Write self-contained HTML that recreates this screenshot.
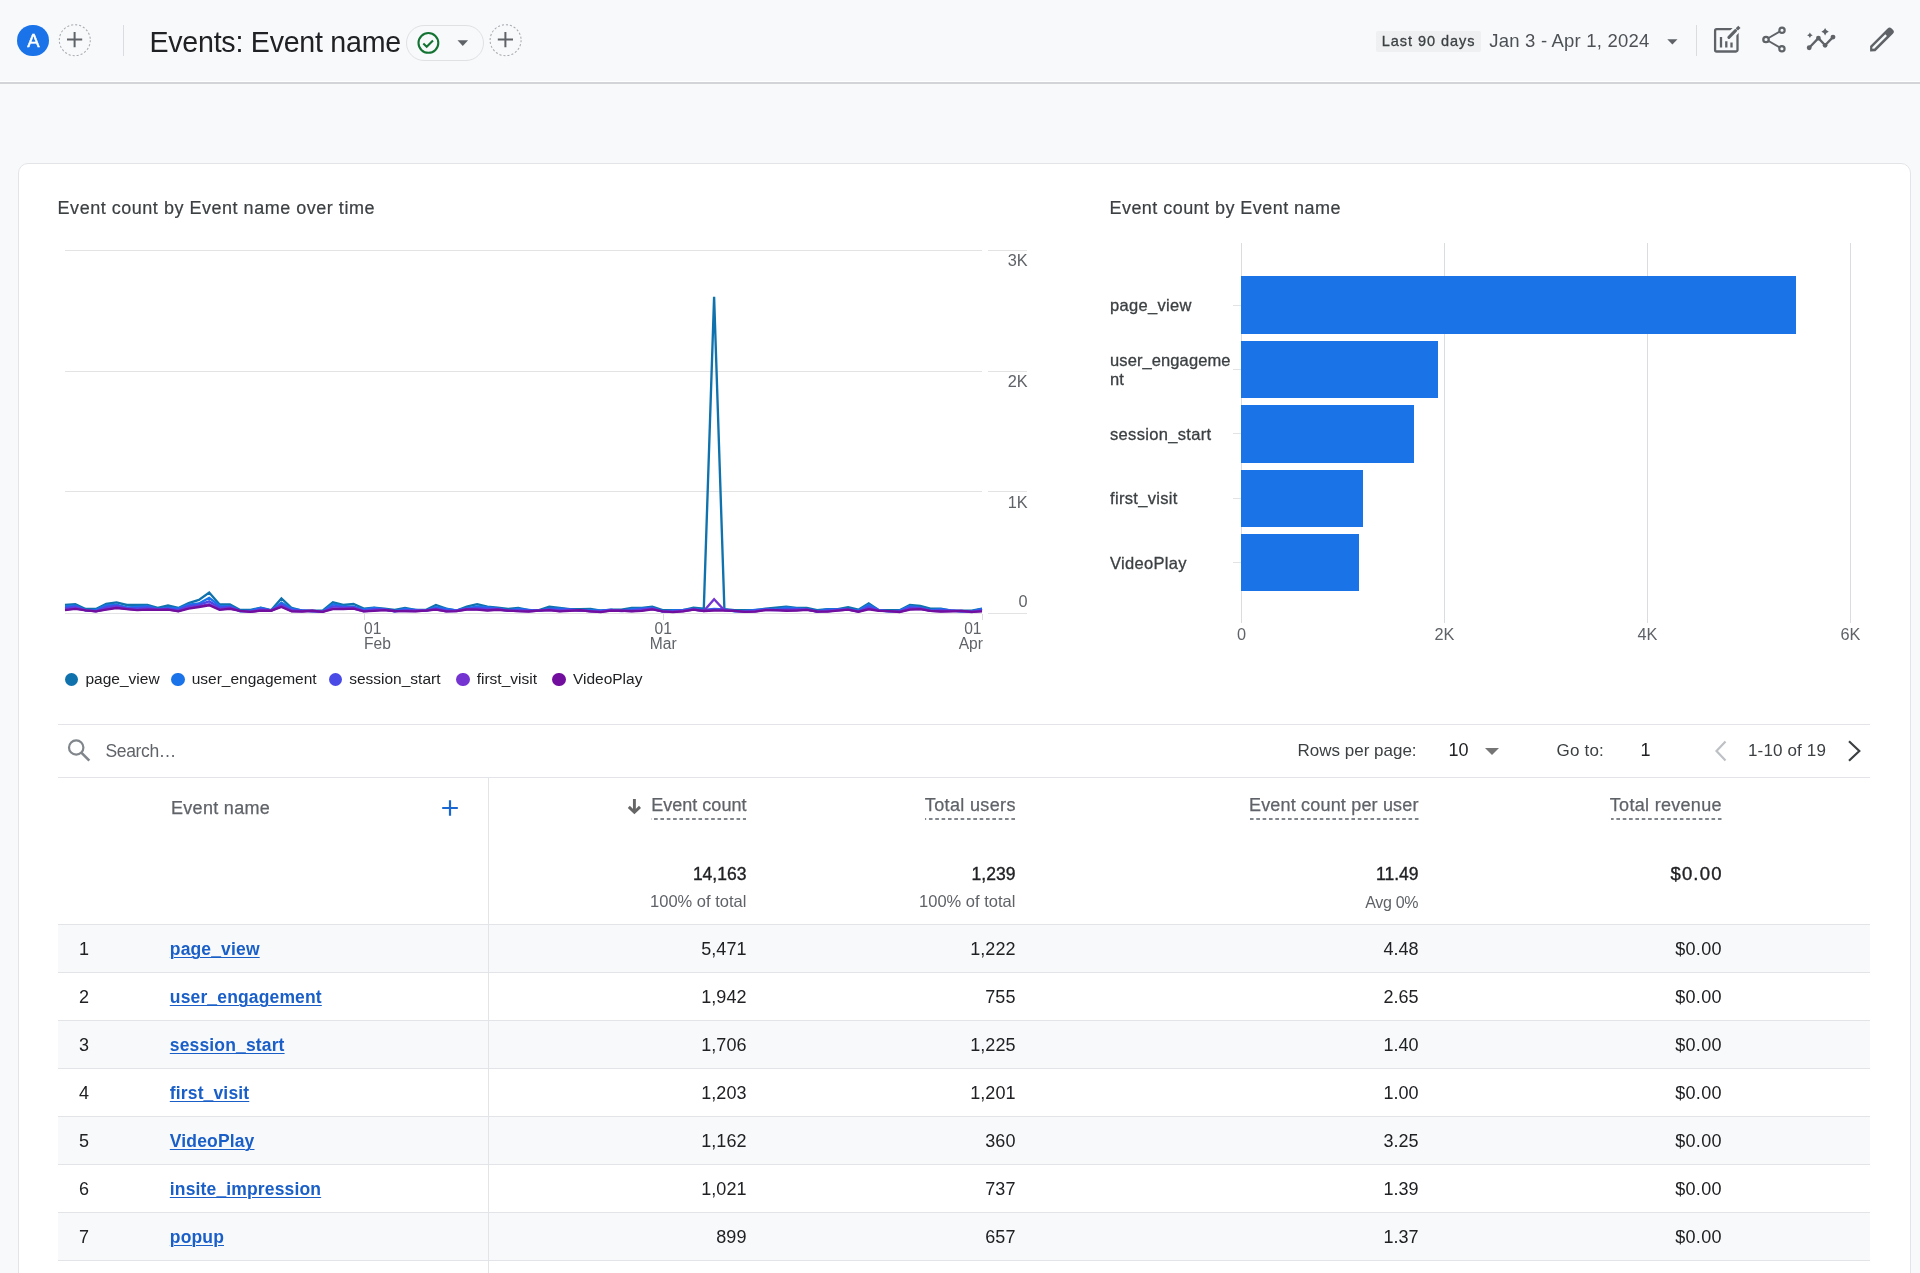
<!DOCTYPE html>
<html><head><meta charset="utf-8"><title>Events: Event name</title><style>
*{box-sizing:border-box}
html,body{margin:0;padding:0}
body{-webkit-font-smoothing:antialiased;width:1920px;height:1273px;overflow:hidden;position:relative;background:#f8f9fa;font-family:"Liberation Sans",sans-serif}
#root{position:absolute;left:0;top:0;width:1920px;height:1273px;will-change:transform}
.t{position:absolute;white-space:nowrap}
.ic{position:absolute;overflow:visible}
#hdr{position:absolute;left:0;top:0;width:1920px;height:84px;background:#f8f9fa;border-bottom:2px solid #d3d4d7;box-shadow:inset 0 -3px 0 -2px #fff}
.avatar{position:absolute;left:17.3px;top:24.6px;width:31.6px;height:31.6px;border-radius:50%;background:#1a73e8;color:#fff;font-size:18.5px;-webkit-text-stroke:0.45px #fff;line-height:31.5px;text-align:center;padding-left:0.5px}
.dplus{position:absolute;width:32px;height:32px;border-radius:50%;border:1.2px dashed #a8abb0}
.vsep{position:absolute;width:1px;background:#dadce0}
.pill{position:absolute;left:406px;top:24.5px;width:78px;height:36.5px;border-radius:19px;border:1px solid #dfe1e5;background:#f8f9fa}
#card{position:absolute;left:18px;top:163px;width:1893px;height:1200px;background:#fff;border:1px solid #e3e4e8;border-radius:10px}
.gl{position:absolute;height:1px;background:#e3e3e3}
.vgl{position:absolute;width:1px;background:#dadce0}
.hl{position:absolute;left:58px;width:1811.5px;height:1px;background:#e3e4e7}
.row{position:absolute;left:58px;width:1811.5px;background:#f8f9fa}
.dash{position:absolute;height:1.5px;background-image:linear-gradient(90deg,transparent 0,transparent 2.35px,#80868b 2.35px);background-size:6.35px 1.5px;background-position:right 0 top 0}
</style></head>
<body>
<div id="root">
<div id="hdr"></div><div class="avatar">A</div><div class="t" style="top:24.92px;font-size:28.6px;line-height:34.32px;color:#202124;letter-spacing:-0.25px;left:149.50px;">Events: Event name</div>
<div class="pill"></div><div class="vsep" style="left:123px;top:25px;height:31px"></div><div style="position:absolute;left:1376px;top:31px;width:105px;height:21px;background:#eff0f2;border-radius:2px"></div><div class="t" style="top:32.87px;font-size:14.5px;line-height:17.40px;color:#3c4043;letter-spacing:0.95px;left:1381.80px;-webkit-text-stroke:0.3px #3c4043;">Last 90 days</div>
<div class="t" style="top:30.49px;font-size:18.5px;line-height:22.20px;color:#4d5156;letter-spacing:0.2px;left:1489.30px;">Jan 3 - Apr 1, 2024</div>
<div class="vsep" style="left:1696px;top:25px;height:31px"></div><svg class="ic" style="left:0;top:0" width="1920" height="80" viewBox="0 0 1920 80">
<circle cx="74.8" cy="40.2" r="15.5" fill="none" stroke="#a8acb1" stroke-width="1.05" stroke-dasharray="2.1 1.95"/>
<path d="M74.6 32v15.2M67 39.6h15.2" stroke="#5f6368" stroke-width="2"/>
<circle cx="505.6" cy="40.2" r="15.5" fill="none" stroke="#a8acb1" stroke-width="1.05" stroke-dasharray="2.1 1.95"/>
<path d="M505.4 32v15.2M497.8 39.6h15.2" stroke="#5f6368" stroke-width="2"/>
<circle cx="428.4" cy="42.9" r="9.9" fill="none" stroke="#137333" stroke-width="2.1"/>
<path d="M423.3 43.4l3.4 3.3 6.3-6.3" fill="none" stroke="#137333" stroke-width="2.1"/>
<path d="M457.5 40.3h10.6l-5.3 5.6z" fill="#5f6368"/>
<path d="M1667.3 39.2h10.2l-5.1 5.3z" fill="#5f6368"/>
<path d="M1736 29.2H1716.6a1.5 1.5 0 0 0-1.5 1.5V50a1.5 1.5 0 0 0 1.5 1.5H1736a1.5 1.5 0 0 0 1.5-1.5V30.7a1.5 1.5 0 0 0-1.5-1.5z" fill="none" stroke="#5f6368" stroke-width="2.3"/>
<path d="M1729.6 36.6L1743 23.2" stroke="#f8f9fa" stroke-width="7.8"/>
<path d="M1721 37v10.6M1726.3 41.2v6.4M1731.5 42.4v5.2" stroke="#5f6368" stroke-width="2.3"/>
<path d="M1728.9 37.3L1735.5 30.7" stroke="#5f6368" stroke-width="3.1" stroke-linecap="round"/>
<path d="M1736.8 29.4L1739.4 26.8" stroke="#5f6368" stroke-width="3.1"/>
<path d="M1766 39.5L1782 30.3M1766 39.5L1781.9 48.7" stroke="#5f6368" stroke-width="1.9"/>
<circle cx="1782" cy="30.3" r="2.65" fill="#f8f9fa" stroke="#5f6368" stroke-width="2.2"/>
<circle cx="1766" cy="39.5" r="2.7" fill="#f8f9fa" stroke="#5f6368" stroke-width="2.3"/>
<circle cx="1781.9" cy="48.7" r="2.65" fill="#f8f9fa" stroke="#5f6368" stroke-width="2.2"/>
<path d="M1809.2 47.7L1818.4 38.1L1825.1 45.3L1833 37.1" fill="none" stroke="#5f6368" stroke-width="2.3" stroke-linejoin="round"/>
<circle cx="1809.2" cy="47.7" r="2.45" fill="#5f6368"/><circle cx="1818.4" cy="38.1" r="2.35" fill="#5f6368"/>
<circle cx="1825.1" cy="45.3" r="2.35" fill="#5f6368"/><circle cx="1833" cy="37.1" r="2.45" fill="#5f6368"/>
<path d="M1825.1 28.05Q1825.95 30.90 1828.80 31.75Q1825.95 32.60 1825.1 35.45Q1824.25 32.60 1821.40 31.75Q1824.25 30.90 1825.1 28.05z" fill="#5f6368"/>
<path d="M1809.9 32.50Q1810.50 34.70 1812.70 35.3Q1810.50 35.90 1809.9 38.10Q1809.30 35.90 1807.10 35.3Q1809.30 34.70 1809.9 32.50z" fill="#5f6368"/>
<path d="M1870.1 51.6L1870.1 46.0L1887.6 28.5Q1889.6 26.5 1891.6 28.5L1892.9 29.8Q1894.9 31.8 1892.9 33.8L1875.4 51.3Z" fill="#5f6368"/>
<path d="M1872.0 48.6L1872.55 47.05L1885.3 34.3L1886.95 35.95L1874.2 48.7Z" fill="#f8f9fa"/>
</svg><div id="card"></div><div class="t" style="top:197.96px;font-size:18px;line-height:21.60px;color:#3c4043;letter-spacing:0.52px;left:57.60px;-webkit-text-stroke:0.2px #3c4043;">Event count by Event name over time</div>
<div class="gl" style="left:65px;top:249.8px;width:917px"></div><div class="gl" style="left:988px;top:249.8px;width:39px"></div><div class="t" style="top:251.17px;font-size:16.3px;line-height:19.56px;color:#5f6368;right:892.40px;text-align:right;">3K</div>
<div class="gl" style="left:65px;top:370.6px;width:917px"></div><div class="gl" style="left:988px;top:370.6px;width:39px"></div><div class="t" style="top:372.07px;font-size:16.3px;line-height:19.56px;color:#5f6368;right:892.40px;text-align:right;">2K</div>
<div class="gl" style="left:65px;top:491.3px;width:917px"></div><div class="gl" style="left:988px;top:491.3px;width:39px"></div><div class="t" style="top:492.57px;font-size:16.3px;line-height:19.56px;color:#5f6368;right:892.40px;text-align:right;">1K</div>
<div class="gl" style="left:65px;top:612.5px;width:917px"></div><div class="gl" style="left:988px;top:612.5px;width:39px"></div><div class="t" style="top:592.47px;font-size:16.3px;line-height:19.56px;color:#5f6368;right:892.40px;text-align:right;">0</div>
<div style="position:absolute;left:363.7px;top:613.5px;width:1px;height:6px;background:#dadce0"></div><div style="position:absolute;left:662.8px;top:613.5px;width:1px;height:6px;background:#dadce0"></div><div style="position:absolute;left:982.2px;top:613.5px;width:1px;height:6px;background:#dadce0"></div><div class="t" style="top:619.83px;font-size:15.6px;line-height:18.72px;color:#5f6368;left:364.00px;">01</div>
<div class="t" style="top:635.03px;font-size:15.6px;line-height:18.72px;color:#5f6368;left:364.00px;">Feb</div>
<div class="t" style="top:619.83px;font-size:15.6px;line-height:18.72px;color:#5f6368;left:363.30px;width:600px;text-align:center;">01</div>
<div class="t" style="top:635.03px;font-size:15.6px;line-height:18.72px;color:#5f6368;left:363.30px;width:600px;text-align:center;">Mar</div>
<div class="t" style="top:619.83px;font-size:15.6px;line-height:18.72px;color:#5f6368;right:938.50px;text-align:right;">01</div>
<div class="t" style="top:635.03px;font-size:15.6px;line-height:18.72px;color:#5f6368;right:937.00px;text-align:right;">Apr</div>
<svg class="ic" style="left:0;top:0" width="1100" height="700" viewBox="0 0 1100 700">
<polyline points="65.0,605.0 75.3,604.2 85.6,609.0 95.9,609.0 106.2,604.0 116.5,602.4 126.8,605.0 137.1,605.0 147.4,605.0 157.7,608.0 168.0,605.5 178.3,608.0 188.6,603.0 198.9,600.0 209.2,592.5 219.6,604.5 229.9,604.5 240.2,610.0 250.5,610.0 260.8,607.6 271.1,610.2 281.4,598.5 291.7,608.0 302.0,610.7 312.3,610.7 322.6,610.7 332.9,602.4 343.2,605.0 353.5,604.0 363.8,608.6 374.1,607.6 384.4,608.6 394.7,610.0 405.0,608.0 415.3,610.0 425.6,610.0 435.9,605.0 446.2,608.6 456.5,610.7 466.8,606.6 477.1,604.2 487.4,606.6 497.7,607.6 508.0,609.0 518.3,608.0 528.7,610.2 539.0,610.2 549.3,606.6 559.6,608.0 569.9,609.2 580.2,609.2 590.5,609.0 600.8,610.7 611.1,609.7 621.4,609.7 631.7,608.0 642.0,608.0 652.3,606.6 662.6,610.2 672.9,610.2 683.2,610.2 693.5,607.6 703.8,608.6 714.1,296.8 724.4,609.2 734.7,610.2 745.0,610.2 755.3,610.2 765.6,608.6 775.9,607.6 786.2,606.6 796.5,608.0 806.8,608.0 817.1,610.2 827.4,609.2 837.8,609.2 848.1,607.3 858.4,609.7 868.7,603.4 879.0,610.2 889.3,610.2 899.6,610.2 909.9,605.0 920.2,606.0 930.5,608.6 940.8,608.6 951.1,610.7 961.4,610.7 971.7,610.7 982.0,608.6" fill="none" stroke="#0f72ad" stroke-width="2.35" stroke-linejoin="miter" stroke-miterlimit="20"/>
<polyline points="65.0,606.3 75.3,605.6 85.6,610.3 95.9,610.1 106.2,605.4 116.5,604.6 126.8,607.4 137.1,606.8 147.4,606.1 157.7,609.1 168.0,607.8 178.3,608.7 188.6,604.7 198.9,603.5 209.2,597.8 219.6,605.8 229.9,606.1 240.2,611.2 250.5,610.6 260.8,608.0 271.1,610.7 281.4,602.6 291.7,608.8 302.0,610.4 312.3,611.4 322.6,611.6 332.9,604.3 343.2,606.3 353.5,606.6 363.8,609.7 374.1,608.0 384.4,609.4 394.7,611.2 405.0,608.9 415.3,609.8 425.6,610.8 435.9,607.3 446.2,609.0 456.5,610.5 466.8,608.5 477.1,606.5 487.4,607.3 497.7,608.5 508.0,610.4 518.3,609.0 528.7,610.0 539.0,610.8 549.3,608.6 559.6,608.6 569.9,609.3 580.2,610.4 590.5,610.2 600.8,610.4 611.1,610.0 621.4,610.9 631.7,609.1 642.0,608.3 652.3,608.0 662.6,611.3 672.9,610.4 683.2,610.0 693.5,609.1 703.8,610.0 714.1,609.0 724.4,609.5 734.7,611.3 745.0,610.8 755.3,610.0 765.6,609.4 775.9,609.4 786.2,607.8 796.5,608.3 806.8,609.3 817.1,611.2 827.4,609.4 837.8,609.5 848.1,609.1 858.4,610.6 868.7,604.9 879.0,610.5 889.3,611.3 899.6,610.6 909.9,606.1 920.2,607.7 930.5,610.1 940.8,609.1 951.1,610.5 961.4,611.6 971.7,611.4 982.0,608.8" fill="none" stroke="#1a73e8" stroke-width="2.35" stroke-linejoin="miter" stroke-miterlimit="20"/>
<polyline points="65.0,608.1 75.3,606.8 85.6,610.3 95.9,611.0 106.2,607.2 116.5,605.8 126.8,608.3 137.1,608.5 147.4,607.4 157.7,609.3 168.0,608.8 178.3,609.9 188.6,606.1 198.9,604.9 209.2,601.4 219.6,607.6 229.9,607.0 240.2,611.1 250.5,611.4 260.8,609.0 271.1,610.5 281.4,604.7 291.7,610.0 302.0,610.6 312.3,611.1 322.6,611.9 332.9,606.4 343.2,607.2 353.5,607.5 363.8,610.7 374.1,609.1 384.4,609.5 394.7,611.3 405.0,610.1 415.3,610.2 425.6,610.5 435.9,608.6 446.2,610.1 456.5,610.5 466.8,608.9 477.1,608.2 487.4,608.6 497.7,608.8 508.0,610.7 518.3,610.2 528.7,610.4 539.0,610.6 549.3,609.5 559.6,609.9 569.9,609.7 580.2,610.3 590.5,611.0 600.8,611.1 611.1,610.0 621.4,611.0 631.7,610.3 642.0,609.2 652.3,608.4 662.6,611.5 672.9,611.3 683.2,610.3 693.5,609.3 703.8,610.7 714.1,609.5 724.4,609.7 734.7,611.2 745.0,611.6 755.3,610.6 765.6,609.5 775.9,610.0 786.2,609.3 796.5,609.1 806.8,609.4 817.1,611.6 827.4,610.4 837.8,609.7 848.1,609.4 858.4,611.3 868.7,606.7 879.0,610.4 889.3,611.4 899.6,611.4 909.9,607.4 920.2,608.2 930.5,610.7 940.8,610.2 951.1,610.6 961.4,611.2 971.7,611.9 982.0,609.8" fill="none" stroke="#4a4ae6" stroke-width="2.35" stroke-linejoin="miter" stroke-miterlimit="20"/>
<polyline points="65.0,609.7 75.3,608.3 85.6,610.2 95.9,611.3 106.2,609.0 116.5,607.3 126.8,608.9 137.1,609.8 147.4,609.1 157.7,609.6 168.0,609.4 178.3,611.0 188.6,607.9 198.9,606.4 209.2,604.3 219.6,609.3 229.9,608.3 240.2,610.9 250.5,611.8 260.8,610.3 271.1,610.5 281.4,606.4 291.7,611.0 302.0,611.2 312.3,610.8 322.6,611.9 332.9,608.5 343.2,608.5 353.5,608.3 363.8,611.2 374.1,610.4 384.4,609.9 394.7,611.1 405.0,611.0 415.3,611.0 425.6,610.5 435.9,609.4 446.2,611.2 456.5,611.0 466.8,609.3 477.1,609.3 487.4,610.0 497.7,609.5 508.0,610.6 518.3,611.0 528.7,611.2 539.0,610.6 549.3,610.0 559.6,611.0 569.9,610.4 580.2,610.3 590.5,611.3 600.8,611.9 611.1,610.4 621.4,610.8 631.7,611.0 642.0,610.4 652.3,609.0 662.6,611.4 672.9,611.9 683.2,611.0 693.5,609.6 703.8,611.0 714.1,599.3 724.4,610.3 734.7,610.9 745.0,611.9 755.3,611.4 765.6,609.9 775.9,610.2 786.2,610.4 796.5,610.1 806.8,609.7 817.1,611.6 827.4,611.4 837.8,610.3 848.1,609.6 858.4,611.6 868.7,608.7 879.0,610.6 889.3,611.2 899.6,611.9 909.9,609.0 920.2,608.8 930.5,610.8 940.8,611.2 951.1,611.0 961.4,611.0 971.7,612.0 982.0,610.9" fill="none" stroke="#7434d2" stroke-width="2.35" stroke-linejoin="miter" stroke-miterlimit="20"/>
<polyline points="65.0,610.2 75.3,608.9 85.6,610.3 95.9,611.3 106.2,609.6 116.5,608.0 126.8,609.1 137.1,610.1 147.4,609.7 157.7,609.9 168.0,609.6 178.3,611.3 188.6,608.6 198.9,607.0 209.2,605.3 219.6,609.9 229.9,608.8 240.2,610.8 250.5,611.9 260.8,610.7 271.1,610.7 281.4,607.0 291.7,611.3 302.0,611.5 312.3,610.8 322.6,611.8 332.9,609.2 343.2,609.1 353.5,608.6 363.8,611.3 374.1,610.8 384.4,610.2 394.7,611.0 405.0,611.2 415.3,611.3 425.6,610.6 435.9,609.6 446.2,611.4 456.5,611.2 466.8,609.5 477.1,609.6 487.4,610.5 497.7,609.8 508.0,610.6 518.3,611.2 528.7,611.5 539.0,610.7 549.3,610.1 559.6,611.3 569.9,610.8 580.2,610.3 590.5,611.3 600.8,612.1 611.1,610.7 621.4,610.7 631.7,611.2 642.0,610.8 652.3,609.4 662.6,611.3 672.9,612.1 683.2,611.3 693.5,609.7 703.8,611.0 714.1,610.5 724.4,610.6 734.7,610.9 745.0,611.9 755.3,611.7 765.6,610.1 775.9,610.2 786.2,610.7 796.5,610.6 806.8,609.9 817.1,611.5 827.4,611.6 837.8,610.7 848.1,609.7 858.4,611.7 868.7,609.3 879.0,610.8 889.3,611.1 899.6,612.0 909.9,609.6 920.2,609.1 930.5,610.8 940.8,611.5 951.1,611.3 961.4,610.9 971.7,611.9 982.0,611.3" fill="none" stroke="#720e9e" stroke-width="2.35" stroke-linejoin="miter" stroke-miterlimit="20"/>
</svg><div style="position:absolute;left:64.8px;top:672.55px;width:13.3px;height:13.3px;border-radius:50%;background:#0f72ad"></div><div class="t" style="top:670.13px;font-size:15.5px;line-height:18.60px;color:#202124;left:85.50px;">page_view</div>
<div style="position:absolute;left:171.3px;top:672.55px;width:13.3px;height:13.3px;border-radius:50%;background:#1a73e8"></div><div class="t" style="top:670.13px;font-size:15.5px;line-height:18.60px;color:#202124;left:191.70px;">user_engagement</div>
<div style="position:absolute;left:329.0px;top:672.55px;width:13.3px;height:13.3px;border-radius:50%;background:#4a4ae6"></div><div class="t" style="top:670.13px;font-size:15.5px;line-height:18.60px;color:#202124;left:349.20px;">session_start</div>
<div style="position:absolute;left:456.4px;top:672.55px;width:13.3px;height:13.3px;border-radius:50%;background:#7434d2"></div><div class="t" style="top:670.13px;font-size:15.5px;line-height:18.60px;color:#202124;left:476.70px;">first_visit</div>
<div style="position:absolute;left:552.4px;top:672.55px;width:13.3px;height:13.3px;border-radius:50%;background:#720e9e"></div><div class="t" style="top:670.13px;font-size:15.5px;line-height:18.60px;color:#202124;left:572.90px;">VideoPlay</div>
<div class="t" style="top:197.56px;font-size:18px;line-height:21.60px;color:#3c4043;letter-spacing:0.45px;left:1109.50px;-webkit-text-stroke:0.2px #3c4043;">Event count by Event name</div>
<div class="vgl" style="left:1241.0px;top:243px;height:380px"></div><div class="t" style="top:625.07px;font-size:16.3px;line-height:19.56px;color:#5f6368;left:941.50px;width:600px;text-align:center;">0</div>
<div class="vgl" style="left:1444.0px;top:243px;height:380px"></div><div class="t" style="top:625.07px;font-size:16.3px;line-height:19.56px;color:#5f6368;left:1144.50px;width:600px;text-align:center;">2K</div>
<div class="vgl" style="left:1647.0px;top:243px;height:380px"></div><div class="t" style="top:625.07px;font-size:16.3px;line-height:19.56px;color:#5f6368;left:1347.50px;width:600px;text-align:center;">4K</div>
<div class="vgl" style="left:1850.0px;top:243px;height:380px"></div><div class="t" style="top:625.07px;font-size:16.3px;line-height:19.56px;color:#5f6368;left:1550.50px;width:600px;text-align:center;">6K</div>
<div style="position:absolute;left:1241px;top:276.30px;width:555.3px;height:57.4px;background:#1b73e8"></div><div class="gl" style="left:1233px;top:304.5px;width:8px"></div><div class="t" style="top:295.78px;font-size:16.5px;line-height:19.80px;color:#3c4043;letter-spacing:0.32px;left:1110.00px;-webkit-text-stroke:0.3px #3c4043;">page_view</div>
<div style="position:absolute;left:1241px;top:340.75px;width:197.1px;height:57.4px;background:#1b73e8"></div><div class="gl" style="left:1233px;top:368.9px;width:8px"></div><div class="t" style="top:351.38px;font-size:16.5px;line-height:19.80px;color:#3c4043;letter-spacing:0.1px;left:1110.00px;-webkit-text-stroke:0.3px #3c4043;">user_engageme</div>
<div class="t" style="top:369.58px;font-size:16.5px;line-height:19.80px;color:#3c4043;letter-spacing:0.1px;left:1110.00px;-webkit-text-stroke:0.3px #3c4043;">nt</div>
<div style="position:absolute;left:1241px;top:405.20px;width:173.2px;height:57.4px;background:#1b73e8"></div><div class="gl" style="left:1233px;top:433.4px;width:8px"></div><div class="t" style="top:424.68px;font-size:16.5px;line-height:19.80px;color:#3c4043;letter-spacing:0.32px;left:1110.00px;-webkit-text-stroke:0.3px #3c4043;">session_start</div>
<div style="position:absolute;left:1241px;top:469.65px;width:122.1px;height:57.4px;background:#1b73e8"></div><div class="gl" style="left:1233px;top:497.9px;width:8px"></div><div class="t" style="top:489.13px;font-size:16.5px;line-height:19.80px;color:#3c4043;letter-spacing:0.32px;left:1110.00px;-webkit-text-stroke:0.3px #3c4043;">first_visit</div>
<div style="position:absolute;left:1241px;top:534.10px;width:117.9px;height:57.4px;background:#1b73e8"></div><div class="gl" style="left:1233px;top:562.3px;width:8px"></div><div class="t" style="top:553.58px;font-size:16.5px;line-height:19.80px;color:#3c4043;letter-spacing:0.32px;left:1110.00px;-webkit-text-stroke:0.3px #3c4043;">VideoPlay</div>
<div class="hl" style="top:724px"></div><div class="hl" style="top:777px"></div><svg class="ic" style="left:64px;top:736px" width="28" height="28" viewBox="0 0 28 28">
<circle cx="12.2" cy="11.5" r="7.2" fill="none" stroke="#80868b" stroke-width="2.2"/><path d="M17.3 16.6l8 8" stroke="#80868b" stroke-width="2.6"/></svg><div class="t" style="top:740.53px;font-size:17.5px;line-height:21.00px;color:#5f6368;letter-spacing:-0.35px;left:105.50px;">Search…</div>
<div class="t" style="top:741.21px;font-size:17px;line-height:20.40px;color:#3c4043;left:1297.50px;">Rows per page:</div>
<div class="t" style="top:740.26px;font-size:18px;line-height:21.60px;color:#202124;left:1448.50px;">10</div>
<svg class="ic" style="left:1485px;top:748px" width="14" height="7" viewBox="0 0 14 7"><path d="M0 0h14L7 7z" fill="#757575"/></svg><div class="t" style="top:741.21px;font-size:17px;line-height:20.40px;color:#3c4043;letter-spacing:0.2px;left:1556.50px;">Go to:</div>
<div class="t" style="top:740.26px;font-size:18px;line-height:21.60px;color:#202124;left:1640.50px;">1</div>
<svg class="ic" style="left:1710px;top:738px" width="22" height="26" viewBox="0 0 22 26"><path d="M15.5 3.5L6.5 13l9 9.5" fill="none" stroke="#bdc1c6" stroke-width="2.2"/></svg><div class="t" style="top:741.21px;font-size:17px;line-height:20.40px;color:#3c4043;letter-spacing:0.15px;left:1748.00px;">1-10 of 19</div>
<svg class="ic" style="left:1843px;top:738px" width="22" height="26" viewBox="0 0 22 26"><path d="M6 3.3l10.3 9.7L6 22.7" fill="none" stroke="#3c4043" stroke-width="2.2"/></svg><div class="vgl" style="left:487.6px;top:777px;height:500px;background:#e3e4e8"></div><div class="t" style="top:797.96px;font-size:18px;line-height:21.60px;color:#5f6368;letter-spacing:0.3px;left:171.00px;-webkit-text-stroke:0.25px #5f6368;">Event name</div>
<svg class="ic" style="left:441px;top:799px" width="18" height="18" viewBox="0 0 18 18"><path d="M9 1.2v15.6M1.2 9h15.6" stroke="#1a67d2" stroke-width="2.2"/></svg><svg class="ic" style="left:0;top:0" width="700" height="830" viewBox="0 0 700 830"><path d="M634.4 799v12" stroke="#666" stroke-width="2.9"/><path d="M628.8 806.9L634.4 812.2L640 806.9" fill="none" stroke="#666" stroke-width="2.9" stroke-miterlimit="10"/></svg><div class="t" style="top:795.06px;font-size:18px;line-height:21.60px;color:#5f6368;right:1173.60px;text-align:right;-webkit-text-stroke:0.25px #5f6368;">Event count</div>
<div class="dash" style="left:650.9px;top:818.2px;width:95.5px"></div><div class="t" style="top:795.06px;font-size:18px;line-height:21.60px;color:#5f6368;letter-spacing:0.35px;right:904.60px;text-align:right;margin-right:-0.35px;-webkit-text-stroke:0.25px #5f6368;">Total users</div>
<div class="dash" style="left:925.4px;top:818.2px;width:90.0px"></div><div class="t" style="top:795.06px;font-size:18px;line-height:21.60px;color:#5f6368;letter-spacing:0.18px;right:501.50px;text-align:right;margin-right:-0.18px;-webkit-text-stroke:0.25px #5f6368;">Event count per user</div>
<div class="dash" style="left:1250.0px;top:818.2px;width:168.5px"></div><div class="t" style="top:795.06px;font-size:18px;line-height:21.60px;color:#5f6368;letter-spacing:0.3px;right:198.50px;text-align:right;margin-right:-0.3px;-webkit-text-stroke:0.25px #5f6368;">Total revenue</div>
<div class="dash" style="left:1611.0px;top:818.2px;width:110.5px"></div><div class="t" style="top:863.93px;font-size:17.5px;line-height:21.00px;color:#202124;right:1173.60px;text-align:right;-webkit-text-stroke:0.35px #202124;">14,163</div>
<div class="t" style="top:892.48px;font-size:16.5px;line-height:19.80px;color:#5f6368;right:1173.60px;text-align:right;">100% of total</div>
<div class="t" style="top:863.93px;font-size:17.5px;line-height:21.00px;color:#202124;right:904.60px;text-align:right;-webkit-text-stroke:0.35px #202124;">1,239</div>
<div class="t" style="top:892.48px;font-size:16.5px;line-height:19.80px;color:#5f6368;right:904.60px;text-align:right;">100% of total</div>
<div class="t" style="top:863.93px;font-size:17.5px;line-height:21.00px;color:#202124;right:501.50px;text-align:right;-webkit-text-stroke:0.35px #202124;">11.49</div>
<div class="t" style="top:893.15px;font-size:16px;line-height:19.20px;color:#5f6368;letter-spacing:-0.3px;right:501.50px;text-align:right;margin-right:0.3px;">Avg 0%</div>
<div class="t" style="top:862.99px;font-size:18.5px;line-height:22.20px;color:#202124;letter-spacing:1.2px;right:198.50px;text-align:right;margin-right:-1.2px;-webkit-text-stroke:0.35px #202124;">$0.00</div>
<div class="row" style="top:925.00px;height:47px"></div><div class="hl" style="top:924.00px"></div><div class="t" style="top:938.86px;font-size:18px;line-height:21.60px;color:#202124;left:79.00px;">1</div>
<div class="t" style="top:939.33px;font-size:17.5px;line-height:21.00px;color:#1a5fc8;font-weight:bold;letter-spacing:0.15px;left:169.80px;text-decoration:underline;text-underline-offset:2px;text-decoration-thickness:1.3px;">page_view</div>
<div class="t" style="top:938.86px;font-size:18px;line-height:21.60px;color:#202124;right:1173.60px;text-align:right;">5,471</div>
<div class="t" style="top:938.86px;font-size:18px;line-height:21.60px;color:#202124;right:904.60px;text-align:right;">1,222</div>
<div class="t" style="top:938.86px;font-size:18px;line-height:21.60px;color:#202124;right:501.50px;text-align:right;">4.48</div>
<div class="t" style="top:938.86px;font-size:18px;line-height:21.60px;color:#202124;letter-spacing:0.3px;right:198.50px;text-align:right;margin-right:-0.3px;">$0.00</div>
<div class="hl" style="top:972.00px"></div><div class="t" style="top:986.86px;font-size:18px;line-height:21.60px;color:#202124;left:79.00px;">2</div>
<div class="t" style="top:987.33px;font-size:17.5px;line-height:21.00px;color:#1a5fc8;font-weight:bold;letter-spacing:0.15px;left:169.80px;text-decoration:underline;text-underline-offset:2px;text-decoration-thickness:1.3px;">user_engagement</div>
<div class="t" style="top:986.86px;font-size:18px;line-height:21.60px;color:#202124;right:1173.60px;text-align:right;">1,942</div>
<div class="t" style="top:986.86px;font-size:18px;line-height:21.60px;color:#202124;right:904.60px;text-align:right;">755</div>
<div class="t" style="top:986.86px;font-size:18px;line-height:21.60px;color:#202124;right:501.50px;text-align:right;">2.65</div>
<div class="t" style="top:986.86px;font-size:18px;line-height:21.60px;color:#202124;letter-spacing:0.3px;right:198.50px;text-align:right;margin-right:-0.3px;">$0.00</div>
<div class="row" style="top:1021.00px;height:47px"></div><div class="hl" style="top:1020.00px"></div><div class="t" style="top:1034.86px;font-size:18px;line-height:21.60px;color:#202124;left:79.00px;">3</div>
<div class="t" style="top:1035.33px;font-size:17.5px;line-height:21.00px;color:#1a5fc8;font-weight:bold;letter-spacing:0.15px;left:169.80px;text-decoration:underline;text-underline-offset:2px;text-decoration-thickness:1.3px;">session_start</div>
<div class="t" style="top:1034.86px;font-size:18px;line-height:21.60px;color:#202124;right:1173.60px;text-align:right;">1,706</div>
<div class="t" style="top:1034.86px;font-size:18px;line-height:21.60px;color:#202124;right:904.60px;text-align:right;">1,225</div>
<div class="t" style="top:1034.86px;font-size:18px;line-height:21.60px;color:#202124;right:501.50px;text-align:right;">1.40</div>
<div class="t" style="top:1034.86px;font-size:18px;line-height:21.60px;color:#202124;letter-spacing:0.3px;right:198.50px;text-align:right;margin-right:-0.3px;">$0.00</div>
<div class="hl" style="top:1068.00px"></div><div class="t" style="top:1082.86px;font-size:18px;line-height:21.60px;color:#202124;left:79.00px;">4</div>
<div class="t" style="top:1083.33px;font-size:17.5px;line-height:21.00px;color:#1a5fc8;font-weight:bold;letter-spacing:0.15px;left:169.80px;text-decoration:underline;text-underline-offset:2px;text-decoration-thickness:1.3px;">first_visit</div>
<div class="t" style="top:1082.86px;font-size:18px;line-height:21.60px;color:#202124;right:1173.60px;text-align:right;">1,203</div>
<div class="t" style="top:1082.86px;font-size:18px;line-height:21.60px;color:#202124;right:904.60px;text-align:right;">1,201</div>
<div class="t" style="top:1082.86px;font-size:18px;line-height:21.60px;color:#202124;right:501.50px;text-align:right;">1.00</div>
<div class="t" style="top:1082.86px;font-size:18px;line-height:21.60px;color:#202124;letter-spacing:0.3px;right:198.50px;text-align:right;margin-right:-0.3px;">$0.00</div>
<div class="row" style="top:1117.00px;height:47px"></div><div class="hl" style="top:1116.00px"></div><div class="t" style="top:1130.86px;font-size:18px;line-height:21.60px;color:#202124;left:79.00px;">5</div>
<div class="t" style="top:1131.33px;font-size:17.5px;line-height:21.00px;color:#1a5fc8;font-weight:bold;letter-spacing:0.15px;left:169.80px;text-decoration:underline;text-underline-offset:2px;text-decoration-thickness:1.3px;">VideoPlay</div>
<div class="t" style="top:1130.86px;font-size:18px;line-height:21.60px;color:#202124;right:1173.60px;text-align:right;">1,162</div>
<div class="t" style="top:1130.86px;font-size:18px;line-height:21.60px;color:#202124;right:904.60px;text-align:right;">360</div>
<div class="t" style="top:1130.86px;font-size:18px;line-height:21.60px;color:#202124;right:501.50px;text-align:right;">3.25</div>
<div class="t" style="top:1130.86px;font-size:18px;line-height:21.60px;color:#202124;letter-spacing:0.3px;right:198.50px;text-align:right;margin-right:-0.3px;">$0.00</div>
<div class="hl" style="top:1164.00px"></div><div class="t" style="top:1178.86px;font-size:18px;line-height:21.60px;color:#202124;left:79.00px;">6</div>
<div class="t" style="top:1179.33px;font-size:17.5px;line-height:21.00px;color:#1a5fc8;font-weight:bold;letter-spacing:0.15px;left:169.80px;text-decoration:underline;text-underline-offset:2px;text-decoration-thickness:1.3px;">insite_impression</div>
<div class="t" style="top:1178.86px;font-size:18px;line-height:21.60px;color:#202124;right:1173.60px;text-align:right;">1,021</div>
<div class="t" style="top:1178.86px;font-size:18px;line-height:21.60px;color:#202124;right:904.60px;text-align:right;">737</div>
<div class="t" style="top:1178.86px;font-size:18px;line-height:21.60px;color:#202124;right:501.50px;text-align:right;">1.39</div>
<div class="t" style="top:1178.86px;font-size:18px;line-height:21.60px;color:#202124;letter-spacing:0.3px;right:198.50px;text-align:right;margin-right:-0.3px;">$0.00</div>
<div class="row" style="top:1213.00px;height:47px"></div><div class="hl" style="top:1212.00px"></div><div class="t" style="top:1226.86px;font-size:18px;line-height:21.60px;color:#202124;left:79.00px;">7</div>
<div class="t" style="top:1227.33px;font-size:17.5px;line-height:21.00px;color:#1a5fc8;font-weight:bold;letter-spacing:0.15px;left:169.80px;text-decoration:underline;text-underline-offset:2px;text-decoration-thickness:1.3px;">popup</div>
<div class="t" style="top:1226.86px;font-size:18px;line-height:21.60px;color:#202124;right:1173.60px;text-align:right;">899</div>
<div class="t" style="top:1226.86px;font-size:18px;line-height:21.60px;color:#202124;right:904.60px;text-align:right;">657</div>
<div class="t" style="top:1226.86px;font-size:18px;line-height:21.60px;color:#202124;right:501.50px;text-align:right;">1.37</div>
<div class="t" style="top:1226.86px;font-size:18px;line-height:21.60px;color:#202124;letter-spacing:0.3px;right:198.50px;text-align:right;margin-right:-0.3px;">$0.00</div>
<div class="hl" style="top:1260.00px"></div><div class="vgl" style="left:487.6px;top:777px;height:500px;background:#e3e4e8"></div>
</div>
</body></html>
